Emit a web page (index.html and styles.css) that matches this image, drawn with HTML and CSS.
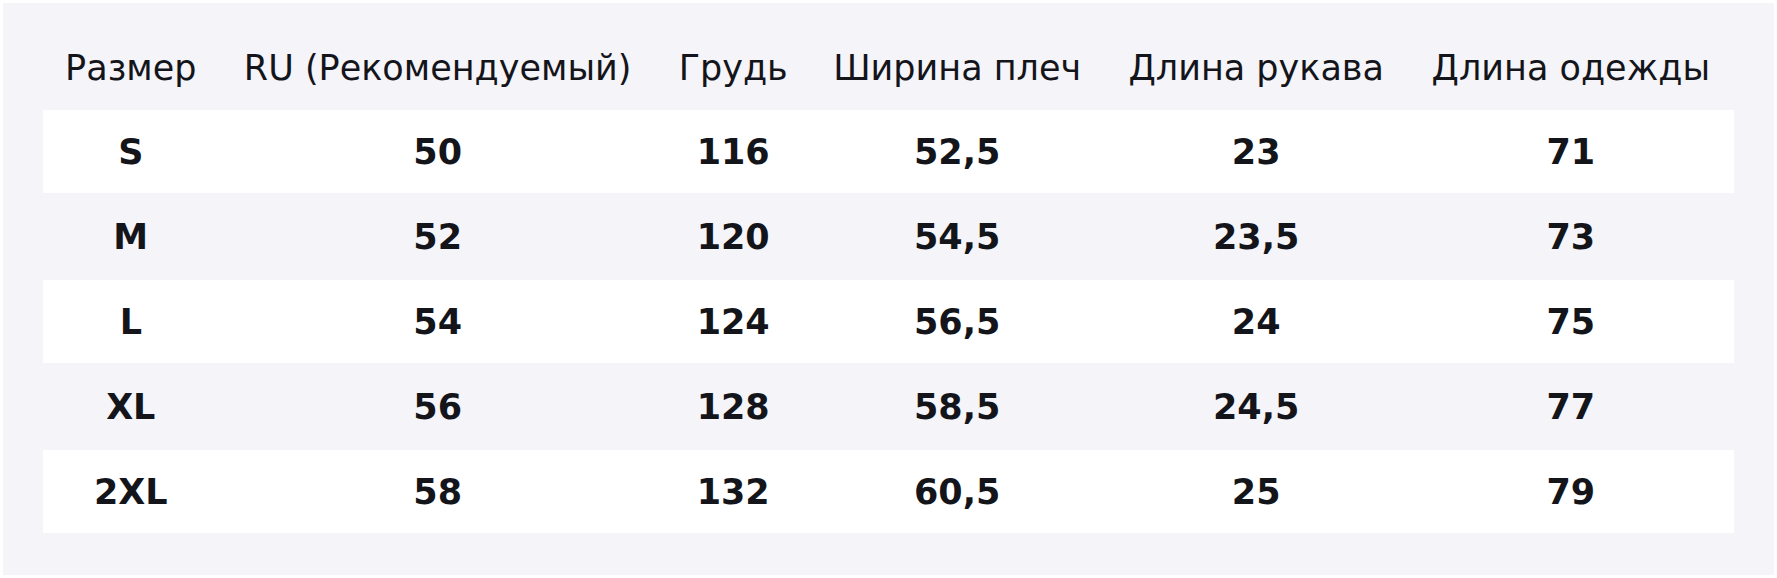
FILE: index.html
```html
<!DOCTYPE html>
<html lang="ru">
<head>
<meta charset="utf-8">
<title>Таблица размеров</title>
<link rel="stylesheet" href="styles.css">
</head>
<body>
<div class="panel">
  <table class="sizes">
    <thead>
      <tr>
        <th>Размер</th>
        <th>RU (Рекомендуемый)</th>
        <th>Грудь</th>
        <th>Ширина плеч</th>
        <th>Длина рукава</th>
        <th>Длина одежды</th>
      </tr>
    </thead>
    <tbody>
      <tr class="light"><td>S</td><td>50</td><td>116</td><td>52,5</td><td>23</td><td>71</td></tr>
      <tr><td>M</td><td>52</td><td>120</td><td>54,5</td><td>23,5</td><td>73</td></tr>
      <tr class="light"><td>L</td><td>54</td><td>124</td><td>56,5</td><td>24</td><td>75</td></tr>
      <tr><td>XL</td><td>56</td><td>128</td><td>58,5</td><td>24,5</td><td>77</td></tr>
      <tr class="light"><td>2XL</td><td>58</td><td>132</td><td>60,5</td><td>25</td><td>79</td></tr>
    </tbody>
  </table>
</div>
</body>
</html>
```
FILE: styles.css
```css
html, body {
  margin: 0;
  padding: 0;
  background: #ffffff;
}
body {
  padding: 3px;
  font-family: "DejaVu Sans", Verdana, sans-serif;
  color: #14151b;
}
.panel {
  background: #f4f4f9;
  padding: 40px;
}
.sizes {
  width: 100%;
  border-collapse: separate;
  border-spacing: 0 2px;
  font-size: 35px;
}
.sizes th {
  font-weight: normal;
  line-height: 42px;
  padding: 2px 20px 19px;
  text-align: center;
  white-space: nowrap;
}
.sizes td {
  font-weight: bold;
  line-height: 42px;
  padding: 21px 20px 20px;
  text-align: center;
  white-space: nowrap;
}
.sizes tr.light td {
  background: #ffffff;
}
```
